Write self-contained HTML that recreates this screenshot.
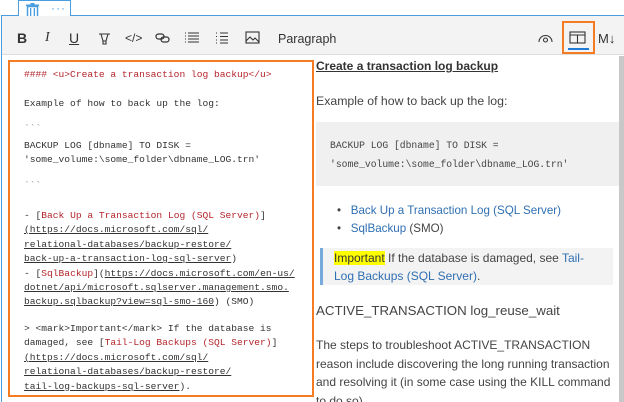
<!DOCTYPE html>
<html><head><meta charset="utf-8"><style>
*{margin:0;padding:0;box-sizing:border-box}
html,body{width:624px;height:402px;overflow:hidden}
body{background:#fff;position:relative;font-family:"Liberation Sans",sans-serif}
.abs{position:absolute}
.mono{font-family:"Liberation Mono",monospace;font-size:9.6px;color:#333;white-space:pre;line-height:14.4px}
.r{color:#b4262c}
.u{text-decoration:underline}
.ic{position:absolute;top:30px;color:#333}
.rt{font-size:12px;color:#444;white-space:nowrap}
a{color:#2f6fb2;text-decoration:none}
</style></head><body>
<div class="abs" style="left:1px;top:15px;width:640px;height:400px;border:1px solid #4a9ee0"></div>
<div class="abs" style="left:18px;top:0;width:53px;height:22px;border:1px solid #4a9ee0;border-bottom:none;background:#fff"></div>
<svg class="abs" style="left:26px;top:3px" width="13" height="15" viewBox="0 0 13 15"><rect x="0" y="1.5" width="13" height="1.6" fill="#4a9ee0"/><rect x="4.5" y="0" width="4" height="2" fill="#4a9ee0"/><rect x="1.5" y="3.5" width="10" height="11" fill="none" stroke="#4a9ee0" stroke-width="1.5"/><rect x="4" y="5" width="1.3" height="8" fill="#4a9ee0"/><rect x="7.7" y="5" width="1.3" height="8" fill="#4a9ee0"/></svg>
<div class="abs" style="left:51px;top:1px;color:#4a9ee0;font-size:12px;letter-spacing:1px">···</div>
<div class="abs" style="left:2px;top:16px;width:622px;height:39px;background:#f3f3f3;border-bottom:1px solid #ddd"></div>
<div class="ic" style="left:17px;font-weight:bold;font-size:14px">B</div>
<div class="ic" style="left:45px;font-style:italic;font-size:14px;font-family:'Liberation Serif',serif">I</div>
<div class="ic" style="left:69px;text-decoration:underline;font-size:14px">U</div>
<svg class="abs" style="left:98px;top:32px" width="13" height="13" viewBox="0 0 13 13" fill="none" stroke="#333" stroke-width="1.1"><path d="M1 2h11M3 2l2 7h3l2-7M5 9v3h3V9"/></svg>
<div class="ic" style="left:125px;font-size:12px;top:31px">&lt;/&gt;</div>
<svg class="abs" style="left:155px;top:32px" width="16" height="12" viewBox="0 0 16 12" fill="none" stroke="#333" stroke-width="1.2"><rect x="1" y="2" width="8" height="5" rx="2.5"/><rect x="6" y="5" width="8" height="5" rx="2.5"/></svg>
<svg class="abs" style="left:184px;top:31px" width="16" height="14" viewBox="0 0 16 14" stroke="#333" stroke-width="1.1"><path d="M1 2h1M4 2h11M1 5h1M4 5h11M1 8h1M4 8h11M1 11h1M4 11h11"/></svg>
<svg class="abs" style="left:215px;top:31px" width="14" height="14" viewBox="0 0 14 14" stroke="#333" stroke-width="1.1"><path d="M1 2h1M5 2h8M1 5.5h1M5 5.5h8M1 9h1M5 9h8M1 12h1M5 12h8"/></svg>
<svg class="abs" style="left:245px;top:31px" width="15" height="13" viewBox="0 0 15 13" fill="none" stroke="#333" stroke-width="1.1"><rect x="1" y="1" width="13" height="11"/><path d="M1 10l4-4 3 3 2-2 4 4"/></svg>
<div class="ic" style="left:278px;font-size:12.5px;top:32px">Paragraph</div>
<svg class="abs" style="left:538px;top:32px" width="15" height="12" viewBox="0 0 15 12" fill="none" stroke="#333" stroke-width="1.1"><path d="M1 10a6.5 6.5 0 0 1 13 0"/><circle cx="7.5" cy="8" r="2"/></svg>
<div class="abs" style="left:562px;top:21px;width:33px;height:33px;border:2.5px solid #f57c22"></div>
<svg class="abs" style="left:569px;top:31px" width="17" height="13" viewBox="0 0 17 13" fill="none" stroke="#333" stroke-width="1.1"><rect x="1" y="1" width="15" height="11"/><path d="M1 4h15M8.5 4v8"/></svg>
<div class="abs" style="left:568px;top:48px;width:21px;height:2px;background:#1e7ad6"></div>
<div class="ic" style="left:598px;font-size:13px;top:31px">M↓</div>
<div class="abs" style="left:8px;top:60px;width:306px;height:337px;border:2.5px solid #f57c22;border-top-width:2px"></div>
<div class="abs mono" style="left:24px;top:68px"><span class="r">#### &lt;u&gt;Create a transaction log backup&lt;/u&gt;</span></div>
<div class="abs mono" style="left:24px;top:97px">Example of how to back up the log:</div>
<div class="abs mono" style="left:24px;top:122px;color:#888">&#96;&#96;&#96;</div>
<div class="abs mono" style="left:24px;top:139px">BACKUP LOG [dbname] TO DISK =
'some_volume:\some_folder\dbname_LOG.trn'</div>
<div class="abs mono" style="left:24px;top:179px;color:#888">&#96;&#96;&#96;</div>
<div class="abs mono" style="left:24px;top:209px">- [<span class="r">Back Up a Transaction Log (SQL Server)</span>]
<span class="u">(https://docs.microsoft.com/sql/</span>
<span class="u">relational-databases/backup-restore/</span>
<span class="u">back-up-a-transaction-log-sql-server</span>)
- [<span class="r">SqlBackup</span>](<span class="u">https://docs.microsoft.com/en-us/</span>
<span class="u">dotnet/api/microsoft.sqlserver.management.smo.</span>
<span class="u">backup.sqlbackup?view=sql-smo-160</span>) (SMO)</div>
<div class="abs mono" style="left:24px;top:322px">&gt; &lt;mark&gt;Important&lt;/mark&gt; If the database is
damaged, see [<span class="r">Tail-Log Backups (SQL Server)</span>]
<span class="u">(https://docs.microsoft.com/sql/</span>
<span class="u">relational-databases/backup-restore/</span>
<span class="u">tail-log-backups-sql-server</span>).</div>
<div class="abs" style="left:619px;top:56px;width:5px;height:346px;background:#c8c8c8"></div>
<div class="abs rt" style="left:316px;top:59px;font-weight:bold;text-decoration:underline;font-size:12px;color:#333">Create a transaction log backup</div>
<div class="abs rt" style="left:316px;top:94px;font-size:12.3px">Example of how to back up the log:</div>
<div class="abs" style="left:316px;top:122px;width:303px;height:64px;background:#f0f0f0"></div>
<div class="abs mono" style="left:330px;top:136px;font-size:9.7px;line-height:19px;color:#444">BACKUP LOG [dbname] TO DISK =
'some_volume:\some_folder\dbname_LOG.trn'</div>
<div class="abs rt" style="left:337px;top:202px;line-height:18px;font-size:11.6px">•&nbsp;&nbsp; <a>Back Up a Transaction Log (SQL Server)</a><br>•&nbsp;&nbsp; <a>SqlBackup</a> (SMO)</div>
<div class="abs" style="left:320px;top:248px;width:293px;height:37px;background:#f3f3f3;border-left:3px solid #76abdb"></div>
<div class="abs rt" style="left:334px;top:249px;line-height:18px"><span style="background:#ffff00;color:#333">Important</span> If the database is damaged, see <a>Tail-</a><br><a>Log Backups (SQL Server)</a>.</div>
<div class="abs" style="left:316px;top:303px;font-size:13.3px;color:#444;white-space:nowrap">ACTIVE_TRANSACTION log_reuse_wait</div>
<div class="abs rt" style="left:316px;top:336px;line-height:18.5px">The steps to troubleshoot ACTIVE_TRANSACTION<br>reason include discovering the long running transaction<br>and resolving it (in some case using the KILL command<br>to do so).</div>
</body></html>
